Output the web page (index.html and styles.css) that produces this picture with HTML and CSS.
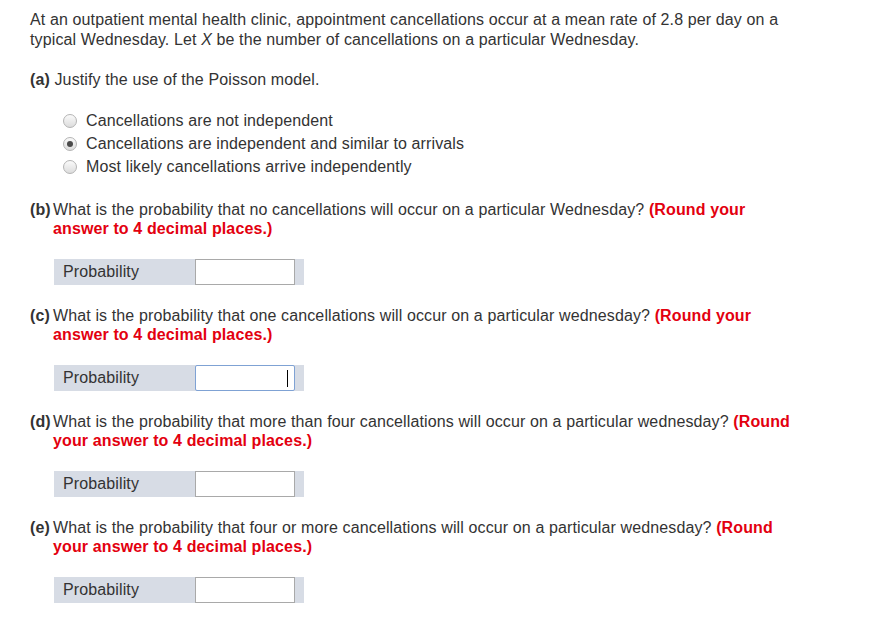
FILE: index.html
```
<!doctype html>
<html lang="en">
<head>
    <meta charset="utf-8">
    <title>Poisson model - cancellations</title>
    <link rel="stylesheet" href="styles.css">
</head>
<body>
<div class="page">
    <p class="intro">At an outpatient mental health clinic, appointment cancellations occur at a mean rate of 2.8 per day on a typical Wednesday. Let <i>X</i> be the number of cancellations on a particular Wednesday.</p>

    <p class="part"><b>(a)</b> Justify the use of the Poisson model.</p>
    <ul class="choices">
        <li><input type="radio" name="a"> Cancellations are not independent</li>
        <li><input type="radio" name="a" checked> Cancellations are independent and similar to arrivals</li>
        <li><input type="radio" name="a"> Most likely cancellations arrive independently</li>
    </ul>

    <div class="question">
        <b class="q-label">(b)</b>
        <div class="q-text">What is the probability that no cancellations will occur on a particular Wednesday? <span class="hint">(Round your answer to 4 decimal places.)</span></div>
    </div>
    <div class="answer"><span class="answer-label">Probability</span><span class="answer-box"></span></div>

    <div class="question">
        <b class="q-label">(c)</b>
        <div class="q-text">What is the probability that one cancellations will occur on a particular wednesday? <span class="hint">(Round your answer to 4 decimal places.)</span></div>
    </div>
    <div class="answer"><span class="answer-label">Probability</span><span class="answer-box focused"></span></div>

    <div class="question">
        <b class="q-label">(d)</b>
        <div class="q-text">What is the probability that more than four cancellations will occur on a particular wednesday? <span class="hint">(Round your answer to 4 decimal places.)</span></div>
    </div>
    <div class="answer"><span class="answer-label">Probability</span><span class="answer-box"></span></div>

    <div class="question">
        <b class="q-label">(e)</b>
        <div class="q-text">What is the probability that four or more cancellations will occur on a particular wednesday? <span class="hint">(Round your answer to 4 decimal places.)</span></div>
    </div>
    <div class="answer"><span class="answer-label">Probability</span><span class="answer-box"></span></div>
</div>
</body>
</html>
```

FILE: styles.css
```
body {
	margin: 0;
	background: #fff;
	font-family: "Liberation Sans", Arial, sans-serif;
	font-size: 16px;
	letter-spacing: 0.12px;
	color: #333;
}
.page {
	width: 765px;
	padding: 10px 0 0 30px;
}
p {
	margin: 0;
}
.intro {
	line-height: 20px;
}
.part {
	margin-top: 20px;
	line-height: 20px;
}
.choices {
	list-style: none;
	margin: 19px 0 0 33px;
	padding: 0;
}
.choices li {
	display: flex;
	align-items: center;
	height: 23px;
}
.choices input {
	appearance: none;
	-webkit-appearance: none;
	width: 14px;
	height: 14px;
	margin: 0 9px 0 0;
	border: 1px solid #b4b4b4;
	border-radius: 50%;
	background: linear-gradient(#fafafa, #dcdcdc);
	display: grid;
	place-items: center;
}
.choices input:checked::after {
	content: "";
	width: 6px;
	height: 6px;
	border-radius: 50%;
	background: #4a4a4a;
}
.question {
	display: flex;
	margin-top: 22px;
	line-height: 19px;
}
.answer + .question {
	margin-top: 21px;
}
.q-label {
	flex: none;
	width: 23px;
}
.q-text {
	flex: 1;
}
.hint {
	color: #e3000f;
	font-weight: bold;
}
.answer {
	display: flex;
	align-items: center;
	width: 250px;
	height: 26px;
	margin: 21px 0 0 24px;
	background: #d7dce5;
}
.answer-label {
	width: 132px;
	padding-left: 9px;
}
.answer-box {
	position: relative;
	box-sizing: border-box;
	width: 100px;
	height: 26px;
	background: #fff;
	border: 1px solid #a9a9a9;
}
.answer-box.focused {
	border-color: #7fa2d4;
	border-radius: 2px;
}
.answer-box.focused::after {
	content: "";
	position: absolute;
	right: 6px;
	top: 4px;
	width: 1px;
	height: 17px;
	background: #000;
}
```
